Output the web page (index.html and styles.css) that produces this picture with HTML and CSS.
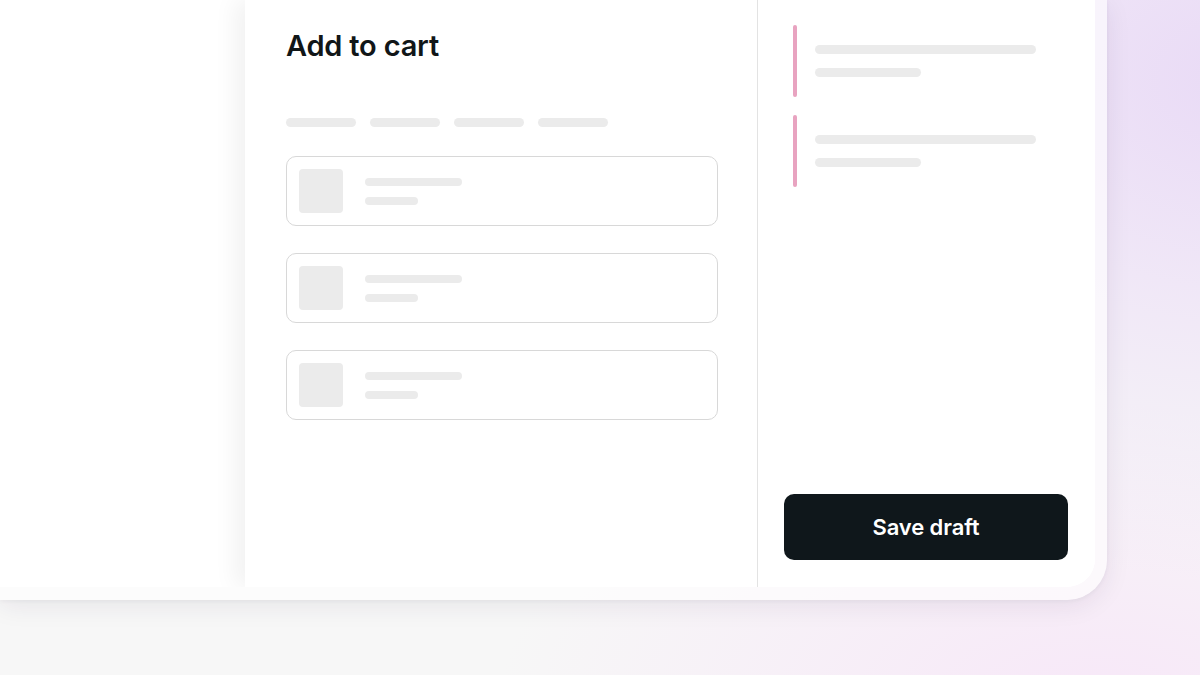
FILE: index.html
```html
<!DOCTYPE html>
<html lang="en">
<head>
<meta charset="utf-8">
<title>Add to cart</title>
<link rel="stylesheet" href="styles.css">
</head>
<body>
<div class="page">
  <div class="frame">
    <div class="screen">
      <aside class="sidebar"></aside>
      <main class="main">
        <h1 class="title">Add to cart</h1>
        <div class="tabs">
          <span class="pill tab"></span>
          <span class="pill tab"></span>
          <span class="pill tab"></span>
          <span class="pill tab"></span>
        </div>
        <div class="cards">
          <div class="card">
            <div class="thumb"></div>
            <div class="lines">
              <span class="pill line-long"></span>
              <span class="pill line-short"></span>
            </div>
          </div>
          <div class="card">
            <div class="thumb"></div>
            <div class="lines">
              <span class="pill line-long"></span>
              <span class="pill line-short"></span>
            </div>
          </div>
          <div class="card">
            <div class="thumb"></div>
            <div class="lines">
              <span class="pill line-long"></span>
              <span class="pill line-short"></span>
            </div>
          </div>
        </div>
      </main>
      <section class="side">
        <div class="notes">
          <div class="note">
            <span class="note-bar"></span>
            <div class="note-lines">
              <span class="pill nline-long"></span>
              <span class="pill nline-short"></span>
            </div>
          </div>
          <div class="note">
            <span class="note-bar"></span>
            <div class="note-lines">
              <span class="pill nline-long"></span>
              <span class="pill nline-short"></span>
            </div>
          </div>
        </div>
        <button class="save">Save draft</button>
      </section>
    </div>
  </div>
</div>
</body>
</html>
```

FILE: styles.css
```css
* { box-sizing: border-box; }
html, body { margin: 0; padding: 0; }
body {
  width: 1200px;
  height: 675px;
  overflow: hidden;
  font-family: Inter, "Noto Sans", "Liberation Sans", sans-serif;
  color: #111618;
}
.page {
  width: 1200px;
  height: 675px;
  background:
    radial-gradient(ellipse 700px 500px at 1250px 80px, #e9daf6 0%, rgba(236, 222, 247, 0.6) 45%, rgba(247, 247, 247, 0) 100%),
    radial-gradient(ellipse 600px 300px at 1100px 700px, rgba(247, 230, 248, 0.9) 0%, rgba(247, 247, 247, 0) 100%),
    #f7f7f7;
}
.frame {
  width: 1107px;
  height: 600px;
  padding: 0 12px 13px 0;
  background: rgba(255, 255, 255, 0.62);
  border-radius: 0 0 40px 0;
  box-shadow: 0 6px 26px rgba(40, 30, 60, 0.08), 0 1px 4px rgba(40, 30, 60, 0.05);
}
.screen {
  display: flex;
  height: 100%;
  background: #fff;
  border-radius: 0 0 28px 0;
  overflow: hidden;
}
.sidebar {
  width: 245px;
  flex: none;
  background: #fff;
}
.main {
  width: 513px;
  flex: none;
  background: #fff;
  border-right: 1px solid #e3e3e3;
  padding: 28px 0 0 41px;
  box-shadow: -10px 0 22px rgba(0, 0, 0, 0.055);
}
.title {
  margin: 0;
  font-size: 29px;
  line-height: 36px;
  font-weight: 600;
  letter-spacing: -0.2px;
}
.pill {
  display: block;
  background: #ebebeb;
  border-radius: 5px;
}
.tabs {
  display: flex;
  gap: 14px;
  margin-top: 54px;
}
.tab {
  width: 70px;
  height: 9px;
}
.cards {
  display: flex;
  flex-direction: column;
  gap: 27px;
  margin-top: 29px;
  width: 432px;
}
.card {
  height: 70px;
  border: 1px solid #d8d8d8;
  border-radius: 10px;
  display: flex;
  align-items: center;
  padding: 0 12px;
  gap: 22px;
}
.thumb {
  width: 44px;
  height: 44px;
  border-radius: 4px;
  background: #ebebeb;
}
.lines {
  display: flex;
  flex-direction: column;
  gap: 11px;
}
.line-long { width: 97px; height: 8px; }
.line-short { width: 53px; height: 8px; }
.side {
  flex: 1;
  background: #fff;
  display: flex;
  flex-direction: column;
  padding: 25px 27px 27px 26px;
}
.notes {
  display: flex;
  flex-direction: column;
  gap: 18px;
  padding-left: 9px;
}
.note {
  display: flex;
  height: 72px;
  gap: 18px;
}
.note-bar {
  width: 4px;
  height: 100%;
  border-radius: 2px;
  background: #e8a3c0;
}
.note-lines {
  display: flex;
  flex-direction: column;
  gap: 14px;
  padding-top: 20px;
}
.nline-long { width: 221px; height: 9px; }
.nline-short { width: 106px; height: 9px; }
.save {
  margin-top: auto;
  height: 66px;
  width: 100%;
  border: none;
  border-radius: 10px;
  background: #0f171b;
  color: #fff;
  font-family: Inter, "Noto Sans", "Liberation Sans", sans-serif;
  font-size: 22px;
  font-weight: 600;
  letter-spacing: -0.1px;
  cursor: pointer;
}
```
